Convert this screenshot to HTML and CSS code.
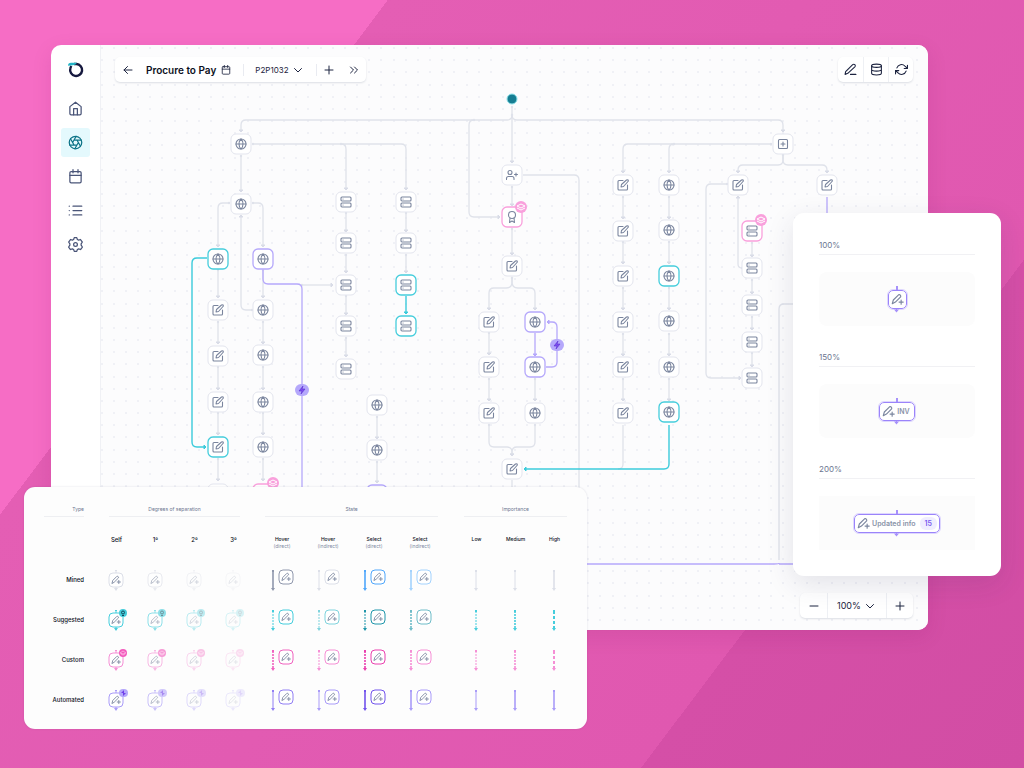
FILE: index.html
```html
<!DOCTYPE html>
<html lang="en">
<head>
<meta charset="utf-8">
<title>Procure to Pay</title>
<meta name="viewport" content="width=device-width, initial-scale=1">
<link rel="stylesheet" href="styles.css">
</head>
<body>
<svg class="defs" aria-hidden="true">
  <defs>
    <pattern id="dots" x="101" y="47" width="73" height="73" patternUnits="userSpaceOnUse">
      <g id="dot-row" class="dot"><circle cx="1" cy="1" r="1"/><circle cx="13" cy="1" r="1"/><circle cx="25" cy="1" r="1"/><circle cx="37" cy="1" r="1"/><circle cx="49" cy="1" r="1"/><circle cx="61" cy="1" r="1"/></g>
      <use href="#dot-row" y="12"/><use href="#dot-row" y="24"/><use href="#dot-row" y="37"/><use href="#dot-row" y="49"/><use href="#dot-row" y="61"/>
    </pattern>
    <marker id="a-gray" viewBox="-4 -4 8 8" markerWidth="8" markerHeight="8" markerUnits="userSpaceOnUse" orient="auto"><path d="M-1 -2L1 0L-1 2Z" fill="#d9dce7" stroke="#d9dce7"/></marker>
    <marker id="a-cyan" viewBox="-4 -4 8 8" markerWidth="8" markerHeight="8" markerUnits="userSpaceOnUse" orient="auto"><path d="M-1 -2L1 0L-1 2Z" fill="#3ccbdb" stroke="#3ccbdb"/></marker>
    <marker id="a-purple" viewBox="-4 -4 8 8" markerWidth="8" markerHeight="8" markerUnits="userSpaceOnUse" orient="auto"><path d="M-1 -2L1 0L-1 2Z" fill="#b5a8fb" stroke="#b5a8fb"/></marker>
    <marker id="d-gray" viewBox="-2 -2 4 4" markerWidth="4" markerHeight="4" markerUnits="userSpaceOnUse"><circle r="1.2" fill="#dfe2eb"/></marker>
    <rect id="box" class="box" x="-10" y="-10" width="20" height="20" rx="5"/>
    <g id="globe"><use href="#box"/><g class="ic" transform="scale(.5) translate(-12 -12)"><circle cx="12" cy="12" r="10"/><path d="M2 12h20M12 2c3 3 4 6 4 10s-1 7-4 10c-3-3-4-6-4-10s1-7 4-10z"/></g></g>
    <g id="edit"><use href="#box"/><g class="ic" transform="scale(.5) translate(-12 -12)"><path d="M12 3H4a2 2 0 0 0-2 2v15a2 2 0 0 0 2 2h15a2 2 0 0 0 2-2v-8"/><path d="M19 2a2 2 0 0 1 3 3l-9 10-5 1 1-5z"/></g></g>
    <g id="server"><use href="#box"/><g class="ic" transform="scale(.5) translate(-12 -12)"><rect x="2" y="2" width="20" height="8" rx="2"/><rect x="2" y="14" width="20" height="8" rx="2"/><path d="M6 6h.1M6 18h.1"/></g></g>
    <g id="award"><use href="#box"/><g class="ic" transform="scale(.5) translate(-12 -12)"><circle cx="12" cy="8" r="7"/><path d="M8 14l-1 9 5-3 5 3-1-9"/></g></g>
    <g id="user"><use href="#box"/><g class="ic" transform="scale(.5) translate(-12 -12)"><path d="M16 21v-2a4 4 0 0 0-4-4H5a4 4 0 0 0-4 4v2M20 8v6M23 11h-6"/><circle cx="8" cy="7" r="4"/></g></g>
    <g id="plusbox"><use href="#box"/><g class="ic" transform="scale(.5) translate(-12 -12)"><rect x="3" y="3" width="18" height="18" rx="2"/><path d="M12 8v8M8 12h8"/></g></g>
    <g id="b-layers"><circle r="6" fill="#f9a0dc"/><path d="M0-3L4-1 0 1-4-1zM-4 1L0 3 4 1" fill="none" stroke="#fff" stroke-linejoin="round"/></g>
    <g id="b-zap"><rect x="-7" y="-6" width="14" height="12" rx="6" fill="#b5a8fb"/><path d="M1-4L-3 1H0L-1 4 3-1H0Z" fill="#7c4df0" stroke="#5b2fd0" stroke-width=".6" stroke-linejoin="round"/></g>
    <g id="pen" class="ic" transform="scale(.4) translate(-12 -12)"><path d="M2 20l2-7L14 3a3 3 0 0 1 4 4L8 17zM19 13v8M15 17h8"/></g>
    <g id="mini"><rect class="box" x="-7" y="-7" width="14" height="14" rx="4"/><use href="#pen"/></g>
    <g id="stem"><path class="ln" d="M0-10V-7M0 7V10"/><path class="fl" d="M-1-10h2v1h-2zM-2 8h4L0 11z"/></g>
    <g id="t-none"><use href="#stem"/><use href="#mini"/></g>
    <g id="t-bulb"><use href="#t-none"/><circle cx="7" cy="-7" r="4" fill="#43cbd9"/><circle cx="7" cy="-7.500" r="1.500" fill="none" stroke="#12485a"/><path d="M6-5h2v1h-2z" fill="#12485a"/></g>
    <g id="t-pink"><use href="#t-none"/><circle cx="7" cy="-7" r="4" fill="#f35bbd"/><path d="M7-9L10-7 7-6 4-7zM5-6L7-5 9-6" fill="none" stroke="#fbb5e2" stroke-width=".8"/></g>
    <g id="t-zap"><use href="#t-none"/><rect x="3" y="-11" width="9" height="8" rx="4" fill="#b5a8fb"/><path d="M8-10L5-7H7L7-4 10-7H8Z" fill="#7040ea"/></g>
    <path id="head" class="fl" d="M-2 8h4L0 11zM-1-10h2v2h-2z"/>
    <g id="l1"><path class="ln" d="M0-9V9"/><use href="#head"/></g>
    <g id="l1d"><path class="ln dash" d="M0-9V9"/><use href="#head"/></g>
    <g id="l2"><path class="ln thick" d="M0-9V9"/><use href="#head"/></g>
    <g id="l2d"><path class="ln thick dash" d="M0-9V9"/><use href="#head"/></g>
    <g id="l2w"><path class="ln thick wide" d="M0-9V9"/><use href="#head"/></g>
  </defs>
</svg>

<div class="desktop">
  <div class="app">
    <nav class="sidebar" aria-label="Main">
      <a href="#" class="logo" aria-label="Home page"><svg width="16" height="16" viewBox="0 0 16 16" fill="none"><path d="M6 2H8.500A6 6 0 1 1 2.300 6.500Q2.600 5 3.500 4" stroke="#16193f" stroke-width="2.400"/><path d="M0 3.800Q0 .8 3 .8H9Q8 3.200 5 3.200Z" fill="#24b4c6"/></svg></a>
      <a href="#" class="nav" aria-label="Home"><svg class="i"><use href="#i-home"/></svg></a>
      <a href="#" class="nav on" aria-label="Processes"><svg class="i"><use href="#i-aperture"/></svg></a>
      <a href="#" class="nav" aria-label="Calendar"><svg class="i"><use href="#i-cal"/></svg></a>
      <a href="#" class="nav" aria-label="List"><svg class="i"><use href="#i-list"/></svg></a>
      <a href="#" class="nav" aria-label="Settings"><svg class="i"><use href="#i-gear"/></svg></a>
    </nav>
    <main class="canvas">
      <svg class="flow" viewBox="101 45 827 585" preserveAspectRatio="xMinYMin slice" role="img" aria-label="Process map">
        <rect x="101" y="45" width="827" height="585" fill="url(#dots)"/>
        <g class="edge">
          <path d="M512 107V162"/>
          <path d="M512 115q0 5-5 5H246q-5 0-5 5V131"/>
          <path d="M512 115q0 5 5 5H778q5 0 5 5V131"/>
          <path d="M474 120q-5 0-5 5V212q0 5 5 5H499"/>
          <path d="M241 156V191"/>
          <path d="M253 144H341q5 0 5 5V189"/>
          <path d="M341 144H401q5 0 5 5V189"/>
          <path d="M229 203H223q-5 0-5 5V246"/>
          <path d="M253 203H258q5 0 5 5V246"/>
          <path d="M252 310H246q-5 0-5-5V216"/>
          <path d="M218 270V297"/><path d="M218 322V343"/><path d="M218 367V389"/><path d="M218 413V434"/><path d="M218 459V480"/>
          <path d="M263 270V297"/><path d="M263 322V343"/><path d="M263 367V389"/><path d="M263 413V434"/><path d="M263 459V480"/>
          <path d="M346 213V231"/><path d="M346 255V272"/><path d="M346 296V314"/><path d="M346 338V356"/>
          <path d="M406 213V231"/><path d="M406 255V272"/><path d="M302 285H332"/>
          <path d="M377 417V438"/><path d="M377 462V482"/>
          <path d="M512 187V205"/><path d="M512 229V254"/>
          <path d="M512 278V282q0 6-6 6H494q-5 0-5 5V309"/><path d="M512 278V282q0 6 6 6H530q5 0 5 5V309"/>
          <path d="M489 333V354"/><path d="M489 379V400"/><path d="M535 379V400"/>
          <path d="M489 425V442q0 5 5 5H507q5 0 5 5V455"/><path d="M535 425V442q0 5-5 5H517q-5 0-5 5V455"/>
          <path d="M771 144H674q-5 0-5 5V172"/><path d="M674 144H628q-5 0-5 5V172"/>
          <path d="M623 197V218"/><path d="M623 242V263"/><path d="M623 288V309"/><path d="M623 334V355"/><path d="M623 379V400"/>
          <path d="M669 197V218"/><path d="M669 242V263"/><path d="M669 288V309"/><path d="M669 334V355"/><path d="M669 379V400"/>
          <path d="M783 155V160q0 5-5 5H743q-5 0-5 5V172"/><path d="M783 155V160q0 5 5 5H822q5 0 5 5V172"/>
          <path d="M727 184H711q-5 0-5 5V373q0 5 5 5H740"/>
          <path d="M742 268q-4 0-4-4V197"/>
          <path d="M752 243V256"/><path d="M752 280V293"/><path d="M752 317V329"/><path d="M752 353V366"/>
        </g>
        <g class="edge plain">
          <path d="M523 175H574q5 0 5 5V560"/><path d="M512 480V500"/>
          <path d="M623 425V464q0 5-5 5"/>
          <path d="M800 304H784q-5 0-5 5V560"/>
        </g>
        <g class="edge cyan"><path d="M207 258H197q-5 0-5 5V442q0 5 5 5H205"/><path d="M406 296V313"/><path d="M669 425V464q0 5-5 5H525"/></g>
        <g class="edge purple"><path d="M535 333V355"/><path d="M546 367H552q5 0 5-5V327q0-5-5-5H548"/></g>
        <g class="edge plain purple"><path d="M263 270V279q0 5 5 5H297q5 0 5 5V558q0 6 6 6H774q5 0 5-1M779 564H800M827 197V230"/></g>
        <circle cx="512" cy="99" r="5" fill="#167d92" stroke="#8ce0e8"/>
        <g class="node">
          <use href="#globe" x="241" y="144"/><use href="#globe" x="241" y="204"/>
          <use href="#server" x="346" y="202"/><use href="#server" x="346" y="243"/><use href="#server" x="346" y="285"/><use href="#server" x="346" y="326"/><use href="#server" x="346" y="369"/>
          <use href="#server" x="406" y="202"/><use href="#server" x="406" y="243"/>
          <use href="#edit" x="218" y="310"/><use href="#edit" x="218" y="356"/><use href="#edit" x="218" y="402"/><use href="#edit" x="218" y="494"/>
          <use href="#globe" x="263" y="310"/><use href="#globe" x="263" y="355"/><use href="#globe" x="263" y="402"/><use href="#globe" x="263" y="447"/>
          <use href="#globe" x="377" y="405"/><use href="#globe" x="377" y="450"/>
          <use href="#user" x="512" y="175"/><use href="#edit" x="512" y="266"/><use href="#edit" x="512" y="469"/>
          <use href="#edit" x="489" y="322"/><use href="#edit" x="489" y="367"/><use href="#edit" x="489" y="413"/><use href="#globe" x="535" y="413"/>
          <use href="#edit" x="623" y="185"/><use href="#edit" x="623" y="231"/><use href="#edit" x="623" y="276"/><use href="#edit" x="623" y="322"/><use href="#edit" x="623" y="367"/><use href="#edit" x="623" y="413"/>
          <use href="#globe" x="669" y="185"/><use href="#globe" x="669" y="230"/><use href="#globe" x="669" y="321"/><use href="#globe" x="669" y="367"/>
          <use href="#plusbox" x="783" y="144"/><use href="#edit" x="738" y="185"/><use href="#edit" x="827" y="185"/>
          <use href="#server" x="752" y="268"/><use href="#server" x="752" y="305"/><use href="#server" x="752" y="342"/><use href="#server" x="752" y="378"/>
        </g>
        <g class="node cyan">
          <use href="#globe" x="218" y="259"/><use href="#edit" x="218" y="447"/><use href="#server" x="406" y="285"/><use href="#server" x="406" y="326"/><use href="#globe" x="669" y="276"/><use href="#globe" x="669" y="412"/>
        </g>
        <g class="node purple">
          <use href="#globe" x="263" y="259"/><use href="#globe" x="535" y="322"/><use href="#globe" x="535" y="367"/><use href="#globe" x="377" y="495"/>
        </g>
        <g class="node pink">
          <use href="#award" x="512" y="217"/><use href="#server" x="752" y="231"/><use href="#globe" x="263" y="494"/>
        </g>
        <use href="#b-layers" x="521" y="207"/><use href="#b-layers" x="761" y="220"/><use href="#b-layers" x="273" y="483"/>
        <use href="#b-zap" x="302" y="390"/><use href="#b-zap" x="557" y="345"/>
      </svg>
      <header class="top">
        <div class="bar">
          <button class="tool back" aria-label="Back"><svg class="i s"><use href="#i-back"/></svg></button>
          <h1 class="title">Procure to Pay</h1>
          <button class="tool date" aria-label="Dates"><svg class="i s"><use href="#i-cal"/></svg></button>
          <label class="pick version"><select aria-label="Process version"><option>P2P1032</option></select><svg class="i s"><use href="#i-down"/></svg></label>
          <button class="tool add" aria-label="Add"><svg class="i s"><use href="#i-plus"/></svg></button>
          <button class="tool more" aria-label="Expand"><svg class="i s"><use href="#i-more"/></svg></button>
        </div>
        <div class="bar split">
          <button class="tool" aria-label="Edit"><svg class="i m"><use href="#i-pencil"/></svg></button>
          <button class="tool" aria-label="Data"><svg class="i m"><use href="#i-db"/></svg></button>
          <button class="tool" aria-label="Refresh"><svg class="i m"><use href="#i-sync"/></svg></button>
        </div>
      </header>
      <footer class="bottom">
        <div class="bar split">
          <button class="tool out" aria-label="Zoom out"><svg class="i s"><use href="#i-minus"/></svg></button>
          <label class="pick zoom"><select aria-label="Zoom level"><option>100%</option></select><svg class="i s"><use href="#i-down"/></svg></label>
          <button class="tool in" aria-label="Zoom in"><svg class="i s"><use href="#i-plus"/></svg></button>
        </div>
      </footer>
    </main>
  </div>

  <aside class="panel zooms">
    <section><h2>100%</h2><div class="stage"><div class="chip"><svg class="penicon" viewBox="-5 -5 10 10"><use href="#pen"/></svg></div></div></section>
    <section><h2>150%</h2><div class="stage"><div class="chip"><svg class="penicon" viewBox="-5 -5 10 10"><use href="#pen"/></svg><span>INV</span></div></div></section>
    <section><h2>200%</h2><div class="stage square"><div class="chip"><svg class="penicon" viewBox="-5 -5 10 10"><use href="#pen"/></svg><span>Updated info</span><b>15</b></div></div></section>
  </aside>

  <section class="panel legend">
    <table>
      <colgroup><col class="c-type"><col class="c-n" span="4"><col class="c-gap"><col class="c-w" span="4"><col class="c-gap2"><col class="c-n" span="3"><col></colgroup>
      <thead>
        <tr class="groups"><th class="g-type"><span>Type</span></th><th colspan="4" class="g-deg"><span>Degrees of separation</span></th><td></td><th colspan="4" class="g-state"><span>State</span></th><td></td><th colspan="3" class="g-imp"><span>Importance</span></th><td></td></tr>
        <tr class="names"><td></td><th>Self</th><th>1º</th><th>2º</th><th>3º</th><td></td><th class="two">Hover<small>(direct)</small></th><th class="two">Hover<small>(indirect)</small></th><th class="two">Select<small>(direct)</small></th><th class="two">Select<small>(indirect)</small></th><td></td><th class="two">Low<small>&nbsp;</small></th><th class="two">Medium<small>&nbsp;</small></th><th class="two">High<small>&nbsp;</small></th><td></td></tr>
      </thead>
      <tbody>
        <tr class="mined"><th>Mined</th>
          <td><svg class="cell"><use href="#t-none"/></svg></td><td class="f1"><svg class="cell"><use href="#t-none"/></svg></td><td class="f2"><svg class="cell"><use href="#t-none"/></svg></td><td class="f3"><svg class="cell"><use href="#t-none"/></svg></td><td></td>
          <td class="hd"><svg class="cell"><use href="#l2" x="-9"/><use href="#mini" x="4" y="-3"/></svg></td><td class="hi"><svg class="cell"><use href="#l1" x="-9"/><use href="#mini" x="4" y="-3"/></svg></td><td class="sd"><svg class="cell"><use href="#l2" x="-9"/><use href="#mini" x="4" y="-3"/></svg></td><td class="si"><svg class="cell"><use href="#l2" x="-9"/><use href="#mini" x="4" y="-3"/></svg></td><td></td>
          <td><svg class="cell"><use href="#l1"/></svg></td><td><svg class="cell"><use href="#l1"/></svg></td><td><svg class="cell"><use href="#l2"/></svg></td><td></td></tr>
        <tr class="suggested"><th>Suggested</th>
          <td><svg class="cell"><use href="#t-bulb"/></svg></td><td class="f1"><svg class="cell"><use href="#t-bulb"/></svg></td><td class="f2"><svg class="cell"><use href="#t-bulb"/></svg></td><td class="f3"><svg class="cell"><use href="#t-bulb"/></svg></td><td></td>
          <td class="hd"><svg class="cell"><use href="#l1d" x="-9"/><use href="#mini" x="4" y="-3"/></svg></td><td class="hi"><svg class="cell"><use href="#l1d" x="-9"/><use href="#mini" x="4" y="-3"/></svg></td><td class="sd"><svg class="cell"><use href="#l1d" x="-9"/><use href="#mini" x="4" y="-3"/></svg></td><td class="si"><svg class="cell"><use href="#l2d" x="-9"/><use href="#mini" x="4" y="-3"/></svg></td><td></td>
          <td><svg class="cell"><use href="#l1d"/></svg></td><td><svg class="cell"><use href="#l2d"/></svg></td><td><svg class="cell"><use href="#l2w"/></svg></td><td></td></tr>
        <tr class="custom"><th>Custom</th>
          <td><svg class="cell"><use href="#t-pink"/></svg></td><td class="f1"><svg class="cell"><use href="#t-pink"/></svg></td><td class="f2"><svg class="cell"><use href="#t-pink"/></svg></td><td class="f3"><svg class="cell"><use href="#t-pink"/></svg></td><td></td>
          <td class="hd"><svg class="cell"><use href="#l2d" x="-9"/><use href="#mini" x="4" y="-3"/></svg></td><td class="hi"><svg class="cell"><use href="#l1d" x="-9"/><use href="#mini" x="4" y="-3"/></svg></td><td class="sd"><svg class="cell"><use href="#l2d" x="-9"/><use href="#mini" x="4" y="-3"/></svg></td><td class="si"><svg class="cell"><use href="#l2d" x="-9"/><use href="#mini" x="4" y="-3"/></svg></td><td></td>
          <td><svg class="cell"><use href="#l1d"/></svg></td><td><svg class="cell"><use href="#l2d"/></svg></td><td><svg class="cell"><use href="#l2w"/></svg></td><td></td></tr>
        <tr class="automated"><th>Automated</th>
          <td><svg class="cell"><use href="#t-zap"/></svg></td><td class="f1"><svg class="cell"><use href="#t-zap"/></svg></td><td class="f2"><svg class="cell"><use href="#t-zap"/></svg></td><td class="f3"><svg class="cell"><use href="#t-zap"/></svg></td><td></td>
          <td class="hd"><svg class="cell"><use href="#l1" x="-9"/><use href="#mini" x="4" y="-3"/></svg></td><td class="hi"><svg class="cell"><use href="#l1" x="-9"/><use href="#mini" x="4" y="-3"/></svg></td><td class="sd"><svg class="cell"><use href="#l2" x="-9"/><use href="#mini" x="4" y="-3"/></svg></td><td class="si"><svg class="cell"><use href="#l2" x="-9"/><use href="#mini" x="4" y="-3"/></svg></td><td></td>
          <td><svg class="cell"><use href="#l1"/></svg></td><td><svg class="cell"><use href="#l2"/></svg></td><td><svg class="cell"><use href="#l2"/></svg></td><td></td></tr>
      </tbody>
    </table>
  </section>
</div>

<svg class="defs" aria-hidden="true">
  <defs>
    <symbol id="i-home" viewBox="0 0 24 24"><path d="M3 9l9-7 9 7v11a2 2 0 0 1-2 2H5a2 2 0 0 1-2-2z"/><path d="M9 22V12h6v10"/></symbol>
    <symbol id="i-aperture" viewBox="0 0 24 24"><circle cx="12" cy="12" r="10"/><path d="M14.3 8l5.7 9.9M9.7 8h11.5M7.4 12l5.7-9.9M9.7 16L4 6.100M14.300 16H2.800M16.600 12l-5.700 9.900"/></symbol>
    <symbol id="i-cal" viewBox="0 0 24 24"><rect x="3" y="4" width="18" height="18" rx="2"/><path d="M16 1v5M8 1v5M3 10h18"/></symbol>
    <symbol id="i-list" viewBox="0 0 24 24"><path d="M8 5h14M8 12h14M8 19h14M2 5h.1M2 12h.1M2 19h.1"/></symbol>
    <symbol id="i-gear" viewBox="0 0 24 24"><circle cx="12" cy="12" r="3"/><path d="M10 1h4l1 3 2 1 3-1 3 4-2 3v2l2 3-3 4-3-1-2 1-1 3h-4l-1-3-2-1-3 1-3-4 2-3v-2L1 8l3-4 3 1 2-1z"/></symbol>
    <symbol id="i-back" viewBox="0 0 24 24"><path d="M20 12H4M11 5l-7 7 7 7"/></symbol>
    <symbol id="i-down" viewBox="0 0 24 24"><path d="M5 9l7 7 7-7"/></symbol>
    <symbol id="i-plus" viewBox="0 0 24 24"><path d="M12 4v16M4 12h16"/></symbol>
    <symbol id="i-minus" viewBox="0 0 24 24"><path d="M4 12h16"/></symbol>
    <symbol id="i-more" viewBox="0 0 24 24"><path d="M13 18l6-6-6-6M5 18l6-6-6-6"/></symbol>
    <symbol id="i-pencil" viewBox="0 0 24 24"><path d="M12 21h10M16 3a2 2 0 0 1 4 4L7 19l-5 2 1-5z"/></symbol>
    <symbol id="i-db" viewBox="0 0 24 24"><ellipse cx="12" cy="5" rx="9" ry="3"/><path d="M21 12c0 2-4 3-9 3s-9-1-9-3M3 5v14c0 2 4 3 9 3s9-1 9-3V5"/></symbol>
    <symbol id="i-sync" viewBox="0 0 24 24"><path d="M23 4v6h-6M1 20v-6h6M3.500 9a9 9 0 0 1 14.900-3.400L23 10M1 14l4.600 4.400A9 9 0 0 0 20.500 15"/></symbol>
  </defs>
</svg>
</body>
</html>
```
FILE: styles.css
```css
* { box-sizing: border-box; }
body {
  margin: 0;
  font-family: Inter, "Liberation Sans", sans-serif;
  color: #0c1022;
}
.defs { position: absolute; width: 0; height: 0; }
button, select { font: inherit; color: inherit; border: 0; background: none; padding: 0; margin: 0; }
h1, h2 { margin: 0; }

.desktop {
  position: relative;
  min-height: 100vh;
  padding: 45px 96px 138px 51px;
  display: flex;
  background: linear-gradient(127deg, #f66dc5 0 24.2%, #e45eb4 24.2%, #e058b0 76.1%, #d54fa7 76.1%, #d24da4);
}
.app {
  flex: 1;
  display: flex;
  overflow: hidden;
  border-radius: 10px;
  background: #fff;
  box-shadow: 0 6px 20px rgba(120, 20, 90, .12);
}

.sidebar {
  width: 50px;
  display: flex;
  flex-direction: column;
  align-items: center;
  gap: 5px;
  padding-top: 17px;
  border-right: 1px solid #f0f1f5;
}
.logo { height: 27px; }
.logo svg { display: block; }
.nav {
  width: 29px;
  height: 29px;
  display: grid;
  place-items: center;
  border-radius: 3px;
  color: #4a5578;
}
.nav.on { background: #e4f9fd; color: #0e7488; }
.i {
  width: 15px;
  height: 15px;
  display: block;
  fill: none;
  stroke: currentColor;
  stroke-width: 2;
  stroke-linecap: round;
  stroke-linejoin: round;
}
.i.s { width: 12px; height: 12px; }
.i.m { width: 13px; height: 13px; }
.date .i.s { width: 10px; height: 10px; }

.canvas {
  position: relative;
  flex: 1;
  display: flex;
  flex-direction: column;
  justify-content: space-between;
  padding: 12px 15px 12px 14px;
  background: #fcfcfd;
}
.flow { position: absolute; inset: 0; width: 100%; height: 100%; }
.dot { fill: #eceef4; }
.edge { fill: none; stroke: #dfe2ea; stroke-width: 1.3; }
.edge path { marker-end: url(#a-gray); marker-start: url(#d-gray); }
.edge.cyan { stroke: #3ccbdb; stroke-width: 1.4; }
.edge.cyan path { marker-end: url(#a-cyan); marker-start: none; }
.edge.purple { stroke: #b5a8fb; stroke-width: 1.3; }
.edge.purple path { marker-end: url(#a-purple); marker-start: none; }
.edge.plain path { marker-end: none; marker-start: none; }
.node { color: #e3e5ee; }
.node.cyan { color: #45cddc; stroke-width: 1.3; }
.node.purple { color: #b5a8fb; stroke-width: 1.3; }
.node.pink { color: #f9a0dc; stroke-width: 1.3; }
.box { fill: #fff; stroke: currentColor; }
.ic { fill: none; stroke: #7a859e; stroke-width: 2.2; stroke-linecap: round; stroke-linejoin: round; }

.top, .bottom { position: relative; display: flex; justify-content: space-between; }
.bottom { justify-content: flex-end; }
.bar {
  height: 25px;
  display: flex;
  align-items: center;
  border-radius: 5px;
  background: #fff;
  color: #1d2440;
  box-shadow: 0 1px 2px rgba(30, 40, 80, .14);
}
.tool { display: grid; place-items: center; width: 25px; height: 25px; }
.title { font-size: 10px; line-height: 14px; font-weight: 600; margin-left: 6px; color: #0c1022; }
.date { width: 20px; }
.pick { display: flex; align-items: center; gap: 3px; }
.pick select { appearance: none; font-size: 8px; line-height: 12px; }
.version { margin-left: 7px; padding: 0 12px 0 11px; border: solid #e9ebf1; border-width: 0 1px; }
.add { width: 24px; }
.split > * + * { border-left: 1px solid #eef0f4; }
.zoom { height: 25px; padding: 0 10px 0 9px; }
.zoom select { font-size: 9px; }
.out, .in { width: 27px; }

.panel { position: absolute; background: #fff; border-radius: 11px; }
.zooms {
  top: 213px;
  right: 23px;
  width: 208px;
  padding: 26px;
  display: grid;
  gap: 25px;
  box-shadow: 0 8px 28px rgba(40, 40, 80, .12);
}
.zooms h2 {
  font-size: 8px;
  line-height: 12px;
  font-weight: 400;
  color: #6c7690;
  padding-bottom: 3px;
  border-bottom: 1px solid #f1f1f4;
  margin-bottom: 17px;
}
.stage { height: 54px; display: grid; place-items: center; border-radius: 8px; background: #fcfcfc; }
.stage.square { border-radius: 0; }
.chip {
  position: relative;
  height: 19px;
  display: flex;
  align-items: center;
  gap: 2px;
  padding: 0 2px;
  border: 1px solid #9b84fa;
  outline: 1px solid #ded7fe;
  border-radius: 5px;
  background: #fff;
  color: #8a93a8;
  font-size: 7px;
  font-weight: 600;
}
.chip span { padding-right: 2px; }
.chip b { padding: 2px 5px; border-radius: 6px; background: #f0edff; color: #7659ee; font-weight: 600; }
.chip::before, .chip::after { content: ""; position: absolute; left: 50%; margin-left: -1px; background: #a691fa; }
.chip::before { top: -5px; width: 2px; height: 4px; }
.chip::after { bottom: -5px; width: 5px; height: 4px; margin-left: -3px; clip-path: polygon(40% 0, 60% 0, 60% 25%, 100% 25%, 50% 100%, 0 25%, 40% 25%); }
.penicon { width: 13px; height: 13px; overflow: visible; }

.legend { left: 24px; bottom: 39px; width: 563px; padding: 16px 0 9px; background: #fdfdfd; box-shadow: 0 0 2px rgba(40, 40, 80, .15); }
.legend table { width: 100%; table-layout: fixed; border-collapse: collapse; font-size: 6px; line-height: 8px; }
.legend th, .legend td { padding: 0; font-weight: 500; text-align: center; }
.c-type { width: 73px; }
.c-n { width: 39px; }
.c-gap { width: 6px; }
.c-w { width: 46px; }
.c-gap2 { width: 14px; }
.legend .groups th { font-size: 5px; font-weight: 400; color: #6c7690; }
.groups span { display: block; line-height: 12px; padding-bottom: 1px; border-bottom: 1px solid #eeeff2; }
.g-type span { margin: 0 13px 0 20px; text-align: right; }
.g-deg span { margin: 0 13px 0 12px; }
.g-state span { margin: 0 5px 0 6px; }
.g-imp span { margin: 0 7px; }
.names { height: 43px; }
.legend .names th { padding-top: 3px; }
.legend .names .two { font-size: 5px; line-height: 7px; padding-top: 9px; }
.names small { display: block; font-size: 5px; font-weight: 400; color: #7f8aa3; }
.legend tbody tr { height: 40px; }
.legend tbody th { text-align: right; padding-right: 13px; }
.cell { display: block; width: 1px; height: 1px; margin: 0 auto; overflow: visible; }
.ln { stroke: currentColor; stroke-width: 1; }
.thick { stroke-width: 1.6; }
.dash { stroke-dasharray: 2 1; }
.wide { stroke-width: 2; stroke-dasharray: 3 2; }
.fl { fill: currentColor; }
.cell { color: #dcdfe8; }
.suggested .cell { color: #45cddc; }
.custom .cell { color: #f58fd5; }
.automated .cell { color: #a99bf8; }
.f1 { opacity: .6; }
.f2 { opacity: .35; }
.f3 { opacity: .2; }
.mined .hd .cell { color: #8f97ac; }
.mined .sd .cell { color: #4ea6fb; }
.mined .si .cell { color: #a3d2fd; }
.suggested .hi .cell { color: #7fd3dd; }
.suggested .sd .cell { color: #1d95aa; }
.suggested .si .cell { color: #6fbcc8; }
.custom .hd .cell { color: #f062bf; }
.custom .sd .cell { color: #ea3fae; }
.automated .hd .cell { color: #917ef4; }
.automated .sd .cell { color: #7152ec; }
```
